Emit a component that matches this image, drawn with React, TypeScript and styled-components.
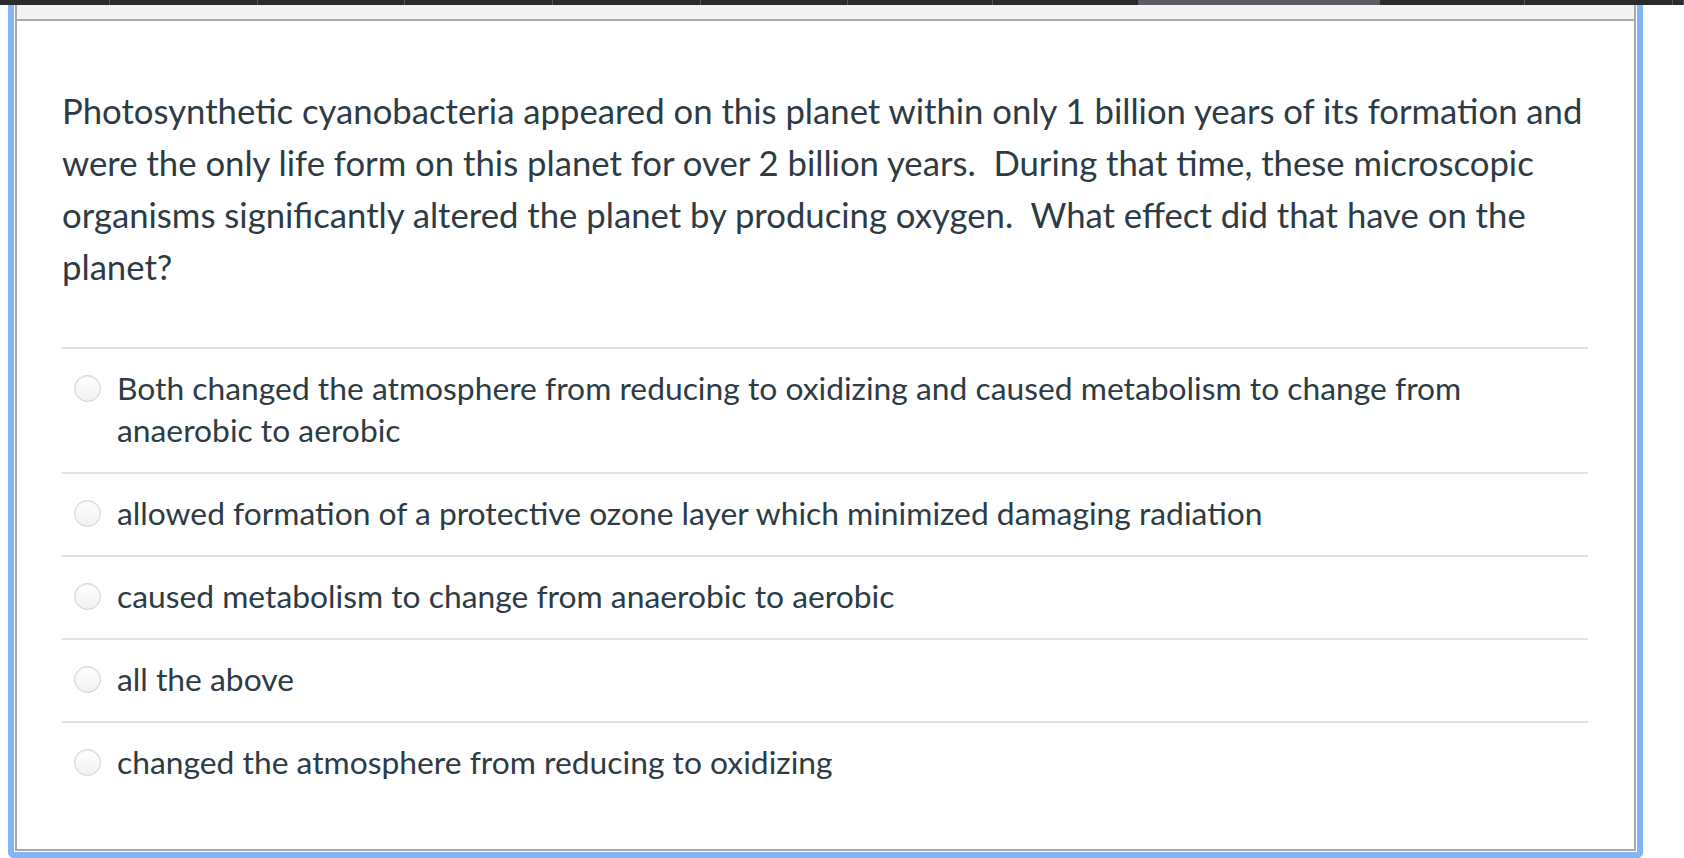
import styled, { createGlobalStyle } from 'styled-components';

const GlobalStyle = createGlobalStyle`
  html, body {
    margin: 0;
    padding: 0;
    background: #ffffff;
    overflow: hidden;
  }
  body {
    font-family: Lato, "Open Sans", "Liberation Sans", sans-serif;
  }
`;

const Page = styled.div`
  width: 1684px;
  height: 858px;
  display: flex;
  flex-direction: column;
  background: #ffffff;
`;

const TabStrip = styled.div`
  height: 5px;
  display: flex;
  background: #2b2a2e;
  flex-shrink: 0;
`;

const Tab = styled.div<{ $w: number; $active?: boolean }>`
  width: ${(p) => p.$w}px;
  flex-shrink: 0;
  background: ${(p) => (p.$active ? '#5f5b63' : '#2b2a2e')};
  border-right: 1px solid #58565c;
  box-sizing: border-box;
`;

const FocusFrame = styled.div`
  margin-left: 8px;
  width: 1635px;
  flex: 1;
  box-sizing: border-box;
  border: 6px solid #82b4f7;
  border-top: none;
  border-radius: 0 0 6px 6px;
  padding: 0 1px 1px 1px;
  display: flex;
`;

const QuestionPanel = styled.div`
  flex: 1;
  border: 2px solid #a9a9a9;
  border-top: none;
  display: flex;
  flex-direction: column;
  background: #ffffff;
`;

const PanelHeader = styled.div`
  height: 14px;
  background: #f3f3f3;
  border-bottom: 2px solid #ababab;
`;

const PanelBody = styled.div`
  padding: 64px 46px 0 45px;
  color: #2d3b45;
`;

const QuestionText = styled.p`
  margin: 0 0 54px;
  font-size: 34.7px;
  line-height: 52px;
  white-space: pre-wrap;
`;

const AnswerList = styled.div`
  display: flex;
  flex-direction: column;
`;

const AnswerRow = styled.label`
  display: flex;
  align-items: flex-start;
  border-top: 2px solid #e1e1e1;
  padding: 18px 0 21px;
  font-size: 31.8px;
  line-height: 42px;
`;

const Radio = styled.span`
  width: 25px;
  height: 25px;
  margin: 8px 16px 0 12px;
  border-radius: 50%;
  border: 1px solid #d0d0d0;
  background: linear-gradient(#ffffff, #f1f1f1);
  box-shadow: inset 0 1px 2px rgba(0, 0, 0, 0.07);
  flex-shrink: 0;
`;

const AnswerText = styled.span`
  flex: 1;
`;

const tabs = [110, 148, 147, 148, 148, 147, 145, 146, 241, 145, 148, 11];

const answers = [
  'Both changed the atmosphere from reducing to oxidizing and caused metabolism to change from anaerobic to aerobic',
  'allowed formation of a protective ozone layer which minimized damaging radiation',
  'caused metabolism to change from anaerobic to aerobic',
  'all the above',
  'changed the atmosphere from reducing to oxidizing',
];

export default function App() {
  return (
    <>
      <GlobalStyle />
      <Page>
        <TabStrip>
          {tabs.map((w, i) => (
            <Tab key={i} $w={w} $active={i === 8} />
          ))}
        </TabStrip>
        <FocusFrame>
          <QuestionPanel>
            <PanelHeader />
            <PanelBody>
              <QuestionText>
                {'Photosynthetic cyanobacteria appeared on this planet within only 1 billion years of its formation and were the only life form on this planet for over 2 billion years.  During that time, these microscopic organisms significantly altered the planet by producing oxygen.  What effect did that have on the planet?'}
              </QuestionText>
              <AnswerList>
                {answers.map((a) => (
                  <AnswerRow key={a}>
                    <Radio />
                    <AnswerText>{a}</AnswerText>
                  </AnswerRow>
                ))}
              </AnswerList>
            </PanelBody>
          </QuestionPanel>
        </FocusFrame>
      </Page>
    </>
  );
}
